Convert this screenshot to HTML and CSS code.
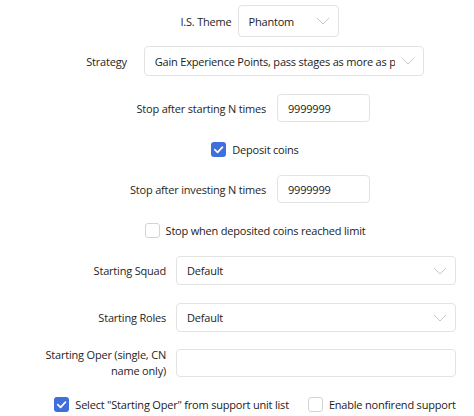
FILE: index.html
```html
<!DOCTYPE html>
<html lang="en">
<head>
    <meta charset="UTF-8">
    <meta name="viewport" content="width=device-width, initial-scale=1.0">
    <title>Roguelike Settings</title>
    <link rel="stylesheet" href="styles.css">
</head>
<body>
    <div class="settings">
        <div class="row row-theme">
            <span class="label">I.S. Theme</span>
            <div class="select select-theme">
                <span>Phantom</span>
                <svg class="chevron" viewBox="0 0 14 8"><path d="M1 1 L7 7 L13 1"/></svg>
            </div>
        </div>

        <div class="row row-strategy">
            <span class="label">Strategy</span>
            <div class="select select-strategy">
                <span class="clip">Gain Experience Points, pass stages as more as possible</span>
                <svg class="chevron" viewBox="0 0 14 8"><path d="M1 1 L7 7 L13 1"/></svg>
            </div>
        </div>

        <div class="row-input">
            <span class="label">Stop after starting N times</span>
            <div class="textbox textbox-small">9999999</div>
        </div>

        <div class="row row-check">
            <span class="check checked">
                <svg viewBox="0 0 16 16"><path d="M4 8.2 L7 11 L12.2 5.4"/></svg>
            </span>
            <span class="check-text">Deposit coins</span>
        </div>

        <div class="row-input">
            <span class="label">Stop after investing N times</span>
            <div class="textbox textbox-small">9999999</div>
        </div>

        <div class="row row-check">
            <span class="check"></span>
            <span class="check-text">Stop when deposited coins reached limit</span>
        </div>

        <div class="grid-row row-squad">
            <span class="label right">Starting Squad</span>
            <div class="select select-wide">
                <span>Default</span>
                <svg class="chevron" viewBox="0 0 14 8"><path d="M1 1 L7 7 L13 1"/></svg>
            </div>
        </div>

        <div class="grid-row row-roles">
            <span class="label right">Starting Roles</span>
            <div class="select select-wide">
                <span>Default</span>
                <svg class="chevron" viewBox="0 0 14 8"><path d="M1 1 L7 7 L13 1"/></svg>
            </div>
        </div>

        <div class="grid-row row-oper">
            <span class="label right">Starting Oper (single, CN name only)</span>
            <div class="textbox textbox-wide"></div>
        </div>

        <div class="row row-bottom">
            <span class="check checked">
                <svg viewBox="0 0 16 16"><path d="M4 8.2 L7 11 L12.2 5.4"/></svg>
            </span>
            <span class="check-text">Select "Starting Oper" from support unit list</span>
            <span class="check check-gap"></span>
            <span class="check-text">Enable nonfirend support</span>
        </div>
    </div>
</body>
</html>
```

FILE: styles.css
```css
body {
    margin: 0;
    background-color: #ffffff;
    font-family: 'Open Sans', 'Noto Sans', sans-serif;
    font-size: 11px;
    letter-spacing: -0.2px;
    color: #1b1b1b;
}

.settings {
    width: 438px;
    margin-left: 36px;
    display: flex;
    flex-direction: column;
}

.row {
    display: flex;
    justify-content: center;
    align-items: center;
}

.label {
    white-space: nowrap;
    color: #262626;
}

.select, .textbox {
    box-sizing: border-box;
    border: 1px solid #e3e3e3;
    border-radius: 4px;
    background-color: #fff;
    display: flex;
    align-items: center;
    padding: 0 10px;
    color: #1b1b1b;
}

.select {
    justify-content: space-between;
}

.chevron {
    width: 14px;
    height: 8px;
    flex-shrink: 0;
}

.chevron path {
    fill: none;
    stroke: #c8c8c8;
    stroke-width: 1;
}

.clip {
    overflow: hidden;
    white-space: nowrap;
    width: 240px;
}

/* top rows */
.row-theme {
    margin-top: 5px;
    height: 32px;
    padding-left: 9px;
}

.row-theme .label {
    margin-right: 6px;
}

.select-theme {
    width: 101px;
    height: 32px;
    padding-right: 8px;
}

.row-strategy {
    margin-top: 9px;
    height: 30px;
}

.row-strategy .label {
    margin-right: 17px;
}

.select-strategy {
    width: 280px;
    height: 30px;
    padding-right: 8px;
}

.row-input {
    display: grid;
    grid-template-columns: 140px 93px;
    column-gap: 11px;
    align-items: center;
    padding-left: 90px;
    margin-top: 18px;
    height: 28px;
}

.row-input .label {
    text-align: right;
}

.textbox-small {
    width: 93px;
    height: 28px;
}

.row-check {
    margin-top: 19px;
    height: 16px;
}

.check {
    box-sizing: border-box;
    width: 15px;
    height: 15px;
    border: 1px solid #d4d4d4;
    border-radius: 3px;
    background-color: #fff;
    margin-right: 6px;
    flex-shrink: 0;
}

.check.checked {
    border: none;
    background-color: #3f6fdc;
}

.check svg {
    display: block;
    width: 15px;
    height: 15px;
}

.check svg path {
    fill: none;
    stroke: #fff;
    stroke-width: 1.8;
    stroke-linecap: round;
    stroke-linejoin: round;
}

.check-text {
    white-space: nowrap;
}

/* label + control grid rows */
.grid-row {
    display: grid;
    grid-template-columns: 126px 280px;
    column-gap: 10px;
    align-items: center;
    padding-left: 4px;
}

.label.right {
    text-align: right;
    white-space: normal;
    line-height: 16px;
}

.select-wide {
    width: 280px;
    height: 29px;
    padding-right: 8px;
}

.textbox-wide {
    width: 280px;
    height: 28px;
}

.row-squad {
    margin-top: 18px;
}

.row-roles {
    margin-top: 18px;
}

.row-oper {
    margin-top: 15px;
}

.row-bottom {
    margin-top: 17px;
    height: 16px;
}

.check-gap {
    margin-left: 19px;
}
```
